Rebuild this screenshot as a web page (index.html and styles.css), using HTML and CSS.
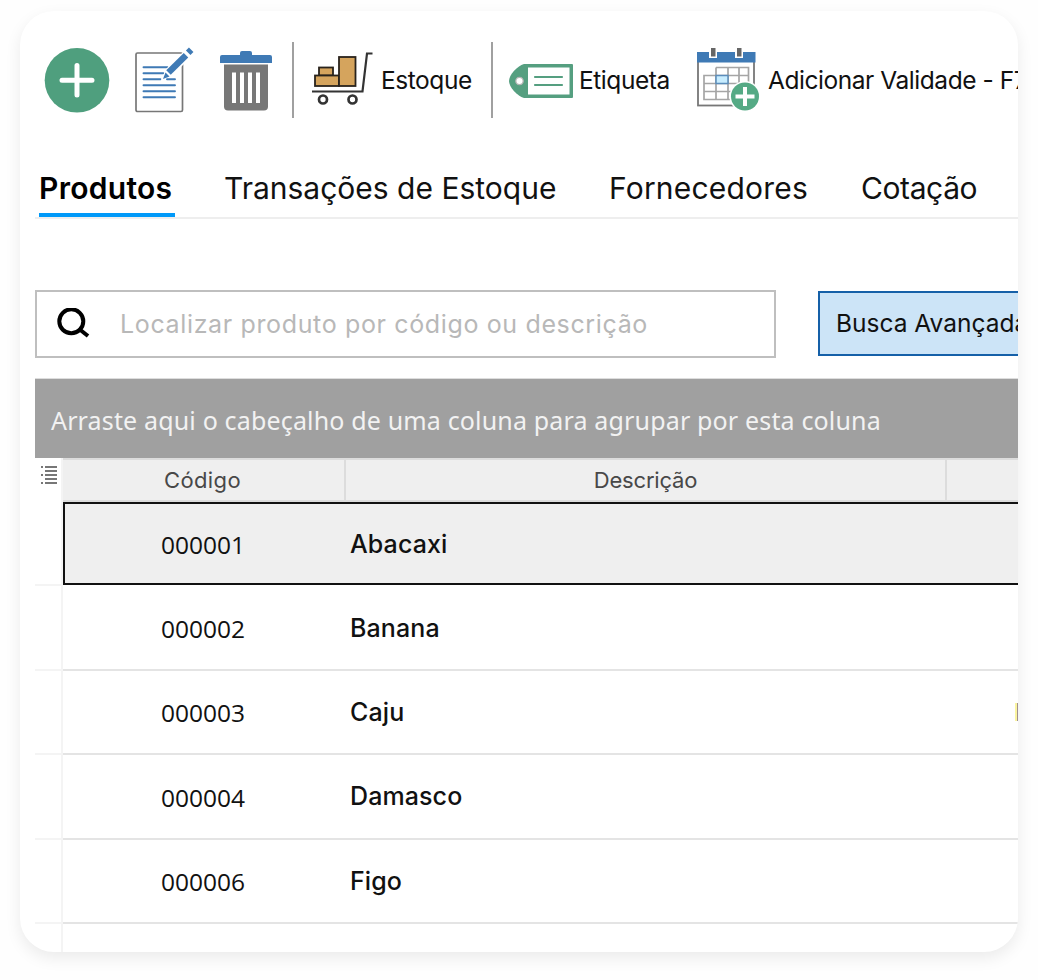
FILE: index.html
```
<!DOCTYPE html>
<html lang="pt-BR">
<head>
  <meta charset="UTF-8" />
  <meta name="viewport" content="width=device-width, initial-scale=1.0" />
  <title>Produtos</title>
  <link rel="stylesheet" href="styles.css">
</head>
<body>

  <div class="window">

    <div class="toolbar">
      <button class="tool tool-add" aria-label="Adicionar">
        <svg width="66" height="66" viewBox="0 0 66 66">
          <circle cx="33" cy="33.300" r="32.300" fill="#4f9f7e"/>
          <path d="M33 18.500v29.500M18 33.300h30" stroke="#fff" stroke-width="5" stroke-linecap="round"/>
        </svg>
      </button>
      <button class="tool tool-edit" aria-label="Editar">
        <svg width="60" height="66" viewBox="0 0 60 66">
          <rect x="2" y="6" width="46.500" height="58.500" rx="1.500" fill="#fff" stroke="#777" stroke-width="1.700"/>
          <path d="M9.500 20.300h24M9.500 26.300h20M9.500 32.300h17M33 32.300h8M9.500 38.300h31.500M9.500 44.300h31.500M9.500 50.300h31.500" stroke="#3f7ab5" stroke-width="1.900" stroke-linecap="round"/>
          <path d="M27 33L32 22L50 4L57 10L38 29Z" fill="#fff"/>
          <path d="M29 32L31.500 25.500L35.500 29.500Z" fill="#3f7ab5"/>
          <path d="M34.500 25.500L52 8.200" stroke="#3f7ab5" stroke-width="6.400"/>
          <path d="M54.200 5.800L57.200 2.800" stroke="#3f7ab5" stroke-width="6.400"/>
        </svg>
      </button>
      <button class="tool tool-trash" aria-label="Excluir">
        <svg width="54" height="66" viewBox="0 0 54 66">
          <path d="M1 10q0-2 2-2H21V6q0-2 2-2h8q2 0 2 2v2H51q2 0 2 2v6H1Z" fill="#3f7ab5"/>
          <path d="M5 17.500H49V59.500q0 4-4 4H9q-4 0-4-4Z" fill="#777"/>
          <path d="M15 25.500v30.500M23 25.500v30.500M31 25.500v30.500M39 25.500v30.500" stroke="#fff" stroke-width="4"/>
        </svg>
      </button>

      <span class="divider"></span>

      <button class="tool tool-stock">
        <svg width="62" height="56" viewBox="0 0 62 56">
          <g fill="#d5a45d" stroke="#29231c" stroke-width="1.800">
            <rect x="7" y="15.500" width="14" height="8"/>
            <rect x="3" y="23.500" width="24" height="10.500"/>
            <rect x="27" y="5" width="16.500" height="29"/>
          </g>
          <path d="M0 39.500H50.500L55 1.500H60.500" fill="none" stroke="#333" stroke-width="2.200"/>
          <g fill="#fff" stroke="#333" stroke-width="2.700">
            <circle cx="11" cy="47.500" r="4"/>
            <circle cx="40.500" cy="47.500" r="4"/>
          </g>
        </svg>
        <span class="tool-text">Estoque</span>
      </button>

      <span class="divider"></span>

      <button class="tool tool-tag">
        <svg width="66" height="36" viewBox="0 0 66 36">
          <path d="M16 2H64q1 0 1 1V35q0 1-1 1H16C9 34 1 25 1 19S9 4 16 2Z" fill="#559f80"/>
          <rect x="20" y="5.500" width="41.500" height="27" fill="#fff"/>
          <path d="M27 15H54M27 23H54" stroke="#559f80" stroke-width="2.200" stroke-linecap="round"/>
          <circle cx="11.500" cy="19" r="3.700" fill="#fff" stroke="#b3b3b3" stroke-width="1.300"/>
        </svg>
        <span class="tool-text">Etiqueta</span>
      </button>

      <button class="tool tool-date">
        <svg width="64" height="66" viewBox="0 0 64 66">
          <rect x="2" y="7" width="56" height="51.500" fill="#fff" stroke="#777" stroke-width="1.800"/>
          <rect x="1" y="5" width="58.500" height="10.500" fill="#3f7ab5"/>
          <rect x="13" y="1" width="8" height="10" fill="#fff"/>
          <rect x="39" y="1" width="8" height="10" fill="#fff"/>
          <rect x="15" y="1" width="4.500" height="8.500" fill="#666"/>
          <rect x="41" y="1" width="4.500" height="8.500" fill="#666"/>
          <path d="M20 20.500H52.500V52.500H8V28.500H52.500M20 20.500V52.500M32 20.500V52.500M43 20.500V52.500M8 36.500H52.500M8 44.500H52.500" fill="none" stroke="#a5a5a5" stroke-width="1.700"/>
          <rect x="20" y="28.500" width="12" height="8" fill="#c8edff" stroke="#5b8dbb" stroke-width="1.500"/>
          <circle cx="49" cy="49.500" r="15.500" fill="#fff"/>
          <circle cx="49" cy="49.500" r="14" fill="#55aa85"/>
          <path d="M49 40V59M39.500 49.500H58.500" stroke="#fff" stroke-width="4"/>
        </svg>
        <span class="tool-text">Adicionar Validade - F7</span>
      </button>
    </div>

    <nav class="tabs">
      <a class="tab active">Produtos</a>
      <a class="tab tab-trans">Transações de Estoque</a>
      <a class="tab tab-forn">Fornecedores</a>
      <a class="tab tab-cot">Cotação</a>
    </nav>

    <div class="search-row">
      <div class="search">
        <svg width="34" height="32" viewBox="0 0 34 32">
          <circle cx="14.300" cy="13.300" r="12" fill="none" stroke="#000" stroke-width="4"/>
          <path d="M21.500 20.500L31 28" stroke="#000" stroke-width="4"/>
        </svg>
        <span class="placeholder">Localizar produto por código ou descrição</span>
      </div>
      <button class="btn-advanced">Busca Avançada</button>
    </div>

    <div class="grid">
      <div class="group-bar"><span>Arraste aqui o cabeçalho de uma coluna para agrupar por esta coluna</span></div>

      <div class="row head">
        <div class="gutter">
          <svg width="16" height="18" viewBox="0 0 16 18">
            <path d="M4 1H16M4 5H16M4 9H16M4 13H16M4 17H16M0 1H2M0 9H2M0 17H2" stroke="#777" stroke-width="1.800"/>
          </svg>
        </div>
        <div class="col-code">Código</div>
        <div class="col-desc">Descrição</div>
        <div class="col-extra"></div>
      </div>

      <div class="row selected">
        <div class="gutter"></div>
        <div class="cells"><div class="code">000001</div><div class="name">Abacaxi</div></div>
      </div>
      <div class="row">
        <div class="gutter"></div>
        <div class="cells"><div class="code">000002</div><div class="name">Banana</div></div>
      </div>
      <div class="row">
        <div class="gutter"></div>
        <div class="cells"><div class="code">000003</div><div class="name">Caju</div><div class="flag"></div></div>
      </div>
      <div class="row">
        <div class="gutter"></div>
        <div class="cells"><div class="code">000004</div><div class="name">Damasco</div></div>
      </div>
      <div class="row">
        <div class="gutter"></div>
        <div class="cells"><div class="code">000006</div><div class="name">Figo</div></div>
      </div>
      <div class="row">
        <div class="gutter"></div>
        <div class="cells"></div>
      </div>
    </div>

  </div>

</body>
</html>
```
FILE: styles.css
```
*, *::before, *::after { box-sizing: border-box; margin: 0; padding: 0; }

body {
  background: #fefefe;
  color: #111;
  font-family: Inter, "Liberation Sans", sans-serif;
  height: 980px;
  padding: 11px 20px 0;
  overflow: hidden;
}

button {
  background: none;
  border: none;
  color: inherit;
  font-family: inherit;
  cursor: pointer;
}

svg { display: block; flex: none; }

.window {
  width: 998px;
  height: 941px;
  background: #fff;
  border-radius: 34px;
  box-shadow: 0 6px 16px rgba(0,0,0,0.08);
  padding: 31px 0 0 15px;
  overflow: hidden;
  white-space: nowrap;
}

/* Toolbar */
.toolbar {
  display: flex;
  align-items: center;
  height: 76px;
}

.tool {
  display: flex;
  align-items: center;
  flex: none;
}

.tool-add { margin-left: 9px; }
.tool-edit { margin-left: 24px; }
.tool-trash { margin-left: 25px; }
.tool-stock { margin: 0 19px 0 18px; width: 160px; }
.tool-tag { margin-left: 15px; width: 187px; }
.tool-date { margin-left: 1px; }

.tool-text {
  font-size: 24.5px;
  line-height: 30px;
  letter-spacing: -0.45px;
  margin-left: 7px;
}

.tool-tag .tool-text { margin-left: 5px; }
.tool-date .tool-text { margin-left: 8px; }

.divider {
  width: 2px;
  height: 76px;
  margin-left: 19px;
  background: #a0a0a0;
  flex: none;
}

.tool-stock + .divider { margin-left: 0; }

/* Tabs */
.tabs {
  display: flex;
  align-items: flex-end;
  height: 101px;
  border-bottom: 2px solid #eee;
  padding-left: 4px;
}

.tab {
  height: 47px;
  font-size: 30px;
  line-height: 36px;
  color: #111;
  flex: none;
}

.tab.active {
  width: 136px;
  font-weight: 600;
  letter-spacing: 0.3px;
  color: #000;
  border-bottom: 4px solid #0099f9;
}

.tab-trans { margin-left: 49px; width: 333px; }
.tab-forn { margin-left: 52px; width: 200px; letter-spacing: 0.2px; }
.tab-cot { margin-left: 52px; letter-spacing: -0.4px; }

/* Search */
.search-row {
  display: flex;
  align-items: center;
  height: 68px;
  margin-top: 71px;
}

.search {
  display: flex;
  align-items: center;
  width: 741px;
  height: 68px;
  border: 2px solid #bfbfbf;
  padding-left: 20px;
  flex: none;
}

.placeholder {
  margin-left: 29px;
  font-size: 25px;
  letter-spacing: 0.64px;
  color: #b8b8b8;
}

.btn-advanced {
  width: 230px;
  height: 65px;
  margin: 0 0 2px 42px;
  padding-left: 16px;
  background: #cce4f7;
  border: 2px solid #1560a8;
  font-size: 24.5px;
  text-align: left;
  flex: none;
}

/* Grid */
.grid { margin-top: 20px; }

.group-bar {
  height: 80px;
  border-top: 1px solid #ddd;
  background: #a0a0a0;
  color: #f2f2f2;
  font-family: "Noto Sans", "Open Sans", sans-serif;
  font-size: 25px;
  letter-spacing: 0.16px;
  line-height: 83px;
  padding-left: 16px;
}

.row {
  display: flex;
  height: 84.4px;
}

.gutter {
  width: 28px;
  border-right: 2px solid #f4f4f4;
  border-bottom: 2px solid #f4f4f4;
  flex: none;
}

.cells {
  display: flex;
  align-items: center;
  flex: 1;
  border-bottom: 2px solid #e4e4e4;
}

.selected .cells {
  height: 83px;
  background: #efefef;
  border: 2px solid #111;
  border-right: none;
}

.head {
  height: 44px;
  font-size: 22px;
  line-height: 40px;
  color: #484848;
  text-align: center;
}

.head .gutter { border-bottom: none; padding: 8px 0 0 6px; }

.head > div:not(.gutter) {
  background: #efefef;
  border-top: 2px solid #dcdcdc;
  border-bottom: 2px solid #dcdcdc;
}

.col-code { width: 283px; padding-right: 2px; border-right: 2px solid #dcdcdc; letter-spacing: 0.4px; }
.col-desc { width: 601px; border-right: 2px solid #dcdcdc; letter-spacing: -0.2px; }
.col-extra { flex: 1; }

.code {
  width: 287px;
  padding: 2px 0 0 98px;
  font-family: "Open Sans", "Noto Sans", sans-serif;
  font-size: 24.5px;
}

.selected .code { width: 285px; padding-left: 96px; }

.name {
  flex: 1;
  font-size: 25px;
  font-weight: 500;
  letter-spacing: 0.1px;
}

.flag {
  width: 3px;
  height: 18px;
  background: #fbf5a0;
  border-right: 1px solid #9f9090;
}
```
